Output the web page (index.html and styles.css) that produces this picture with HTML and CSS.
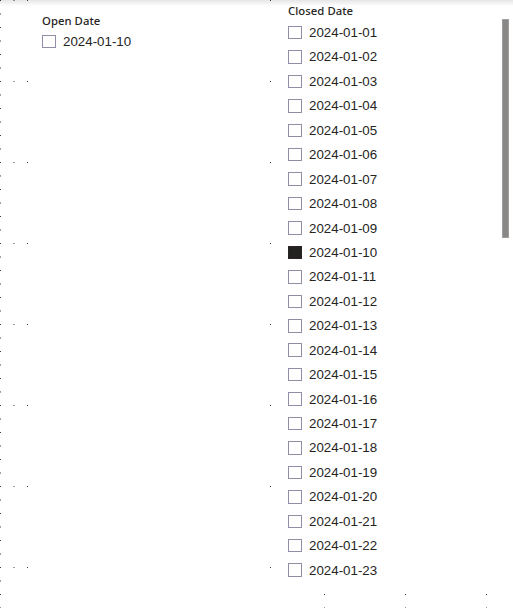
FILE: index.html
```html
<!DOCTYPE html>
<html>
<head>
<meta charset="utf-8">
<link rel="stylesheet" href="styles.css">
</head>
<body>
<div class="canvas">
  <section class="slicer slicer-open">
    <div class="slicer-title">Open Date</div>
    <ul class="items">
      <li class="item"><span class="box"></span><span class="label">2024-01-10</span></li>
    </ul>
  </section>
  <section class="slicer slicer-closed">
    <div class="slicer-title">Closed Date</div>
    <div class="list-wrap">
      <ul class="items">
        <li class="item"><span class="box"></span><span class="label">2024-01-01</span></li>
        <li class="item"><span class="box"></span><span class="label">2024-01-02</span></li>
        <li class="item"><span class="box"></span><span class="label">2024-01-03</span></li>
        <li class="item"><span class="box"></span><span class="label">2024-01-04</span></li>
        <li class="item"><span class="box"></span><span class="label">2024-01-05</span></li>
        <li class="item"><span class="box"></span><span class="label">2024-01-06</span></li>
        <li class="item"><span class="box"></span><span class="label">2024-01-07</span></li>
        <li class="item"><span class="box"></span><span class="label">2024-01-08</span></li>
        <li class="item"><span class="box"></span><span class="label">2024-01-09</span></li>
        <li class="item"><span class="box checked"></span><span class="label">2024-01-10</span></li>
        <li class="item"><span class="box"></span><span class="label">2024-01-11</span></li>
        <li class="item"><span class="box"></span><span class="label">2024-01-12</span></li>
        <li class="item"><span class="box"></span><span class="label">2024-01-13</span></li>
        <li class="item"><span class="box"></span><span class="label">2024-01-14</span></li>
        <li class="item"><span class="box"></span><span class="label">2024-01-15</span></li>
        <li class="item"><span class="box"></span><span class="label">2024-01-16</span></li>
        <li class="item"><span class="box"></span><span class="label">2024-01-17</span></li>
        <li class="item"><span class="box"></span><span class="label">2024-01-18</span></li>
        <li class="item"><span class="box"></span><span class="label">2024-01-19</span></li>
        <li class="item"><span class="box"></span><span class="label">2024-01-20</span></li>
        <li class="item"><span class="box"></span><span class="label">2024-01-21</span></li>
        <li class="item"><span class="box"></span><span class="label">2024-01-22</span></li>
        <li class="item"><span class="box"></span><span class="label">2024-01-23</span></li>
      </ul>
      <div class="scroll-track"><div class="scroll-thumb"></div></div>
    </div>
  </section>
</div>
</body>
</html>
```

FILE: styles.css
```css
* { box-sizing: border-box; }

html, body {
  margin: 0;
  padding: 0;
  background: #ffffff;
}

body {
  position: relative;
  width: 513px;
  height: 608px;
  overflow: hidden;
  font-family: "Liberation Sans", Arial, sans-serif;
  color: #252423;
}

body::before {
  content: "";
  position: absolute;
  left: 0;
  top: 0;
  right: 0;
  height: 6px;
  background: linear-gradient(to bottom, rgba(0,0,0,0.10), rgba(0,0,0,0));
  z-index: 5;
  pointer-events: none;
}

.canvas {
  display: flex;
  align-items: flex-start;
  height: 608px;
  background-color: #ffffff;
  background-image:
    radial-gradient(circle at 0.5px 0.5px, #3a3a3a 0.75px, transparent 0.8px),
    radial-gradient(circle at 0.5px 0.5px, #3a3a3a 0.75px, transparent 0.8px);
  background-size: 81px 13.5px, 13.5px 81px;
  background-position: 0 0, 0 0;
}

.slicer {
  background: #ffffff;
  overflow: hidden;
  padding-left: 9px;
}

.slicer-open {
  margin-left: 33px;
  width: 235px;
  height: 608px;
  padding-top: 12.5px;
}

.slicer-closed {
  margin-left: 11px;
  flex: 1;
  height: 588px;
  padding-top: 2.5px;
}

.slicer-title {
  font-family: "Noto Sans", "Open Sans", sans-serif;
  font-weight: 500;
  font-size: 11.3px;
  line-height: 16px;
  height: 16px;
  color: #252423;
  letter-spacing: 0.05px;
}

.items {
  list-style: none;
  margin: 0;
  padding: 0;
}

.slicer-open .items { margin-top: 1px; }

.list-wrap {
  display: flex;
  margin-top: 1.8px;
}

.list-wrap .items { flex: 1; }

.item {
  display: flex;
  align-items: center;
  height: 24.45px;
}

.box {
  flex: none;
  width: 13.5px;
  height: 13.5px;
  border: 1px solid #928ca4;
  background: #ffffff;
  margin-right: 7.5px;
}

.box.checked {
  background: #222120;
  border-color: #2a2424;
}

.label {
  font-size: 13.33px;
  line-height: 15px;
  color: #252423;
  white-space: nowrap;
}

.scroll-track {
  flex: none;
  width: 7px;
  margin-right: 4px;
  margin-top: -1.3px;
}

.scroll-thumb {
  width: 7px;
  height: 219px;
  background: #8a8886;
  border: 1px solid #a19f9d;
}
```
